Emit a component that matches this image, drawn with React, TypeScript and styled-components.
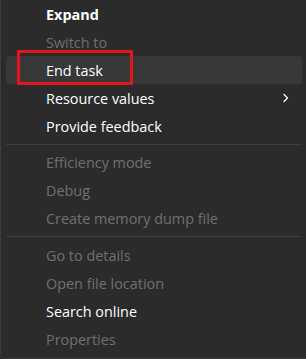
import React from "react";
import styled, { createGlobalStyle } from "styled-components";

const Global = createGlobalStyle`
  html, body { margin: 0; padding: 0; background: #2b2b2b; }
  body { width: 306px; height: 359px; overflow: hidden; }
`;

const Menu = styled.div`
  box-sizing: border-box;
  width: 310px;
  height: 359px;
  background: #2b2b2b;
  border-left: 1px solid #3c3c3c;
  border-bottom: 1px solid #3c3c3c;
  border-bottom-left-radius: 6px;
  padding: 0 4px 4px 5px;
  font-family: "Segoe UI", "Open Sans", "Noto Sans", sans-serif;
  font-size: 14.4px;
  display: flex;
  flex-direction: column;
`;

const Row = styled.div<{ $disabled?: boolean; $bold?: boolean; $hover?: boolean }>`
  position: relative;
  height: 28px;
  width: 296px;
  display: flex;
  align-items: center;
  padding-left: 40px;
  box-sizing: border-box;
  border-radius: 4px;
  color: ${(p) => (p.$disabled ? "#707070" : "#ffffff")};
  font-weight: ${(p) => (p.$bold ? 700 : 400)};
  background: ${(p) => (p.$hover ? "#383838" : "transparent")};
`;

const Label = styled.span`
  position: relative;
`;

const Separator = styled.div<{ $h: number }>`
  height: ${(p) => p.$h}px;
  width: 296px;
  display: flex;
  align-items: center;
  &::after {
    content: "";
    display: block;
    width: 100%;
    height: 1px;
    background: #3d3d3d;
  }
`;

const Highlight = styled.div`
  position: absolute;
  left: 11px;
  top: -6px;
  width: 110px;
  height: 29px;
  border: 3px solid #e3161f;
  border-radius: 1px;
`;

const Chevron = styled.svg`
  position: absolute;
  right: 13px;
  top: 9px;
`;

type Item = { label: string; disabled?: boolean; bold?: boolean; hover?: boolean; sub?: boolean; mark?: boolean };

const group1: Item[] = [
  { label: "Expand", bold: true },
  { label: "Switch to", disabled: true },
  { label: "End task", hover: true, mark: true },
  { label: "Resource values", sub: true },
  { label: "Provide feedback" },
];
const group2: Item[] = [
  { label: "Efficiency mode", disabled: true },
  { label: "Debug", disabled: true },
  { label: "Create memory dump file", disabled: true },
];
const group3: Item[] = [
  { label: "Go to details", disabled: true },
  { label: "Open file location", disabled: true },
  { label: "Search online" },
  { label: "Properties", disabled: true },
];

function Rows({ items }: { items: Item[] }) {
  return (
    <>
      {items.map((it) => (
        <Row key={it.label} $disabled={it.disabled} $bold={it.bold} $hover={it.hover}>
          {it.mark && <Highlight />}
          <Label>{it.label}</Label>
          {it.sub && (
            <Chevron width="6" height="10" viewBox="0 0 6 10">
              <path d="M1 1.5 L4.5 5 L1 8.5" fill="none" stroke="#ffffff" strokeWidth="1.2" strokeLinecap="round" strokeLinejoin="round" />
            </Chevron>
          )}
        </Row>
      ))}
    </>
  );
}

export default function App() {
  return (
    <>
      <Global />
      <Menu>
        <Rows items={group1} />
        <Separator $h={8} />
        <Rows items={group2} />
        <Separator $h={9} />
        <Rows items={group3} />
      </Menu>
    </>
  );
}
